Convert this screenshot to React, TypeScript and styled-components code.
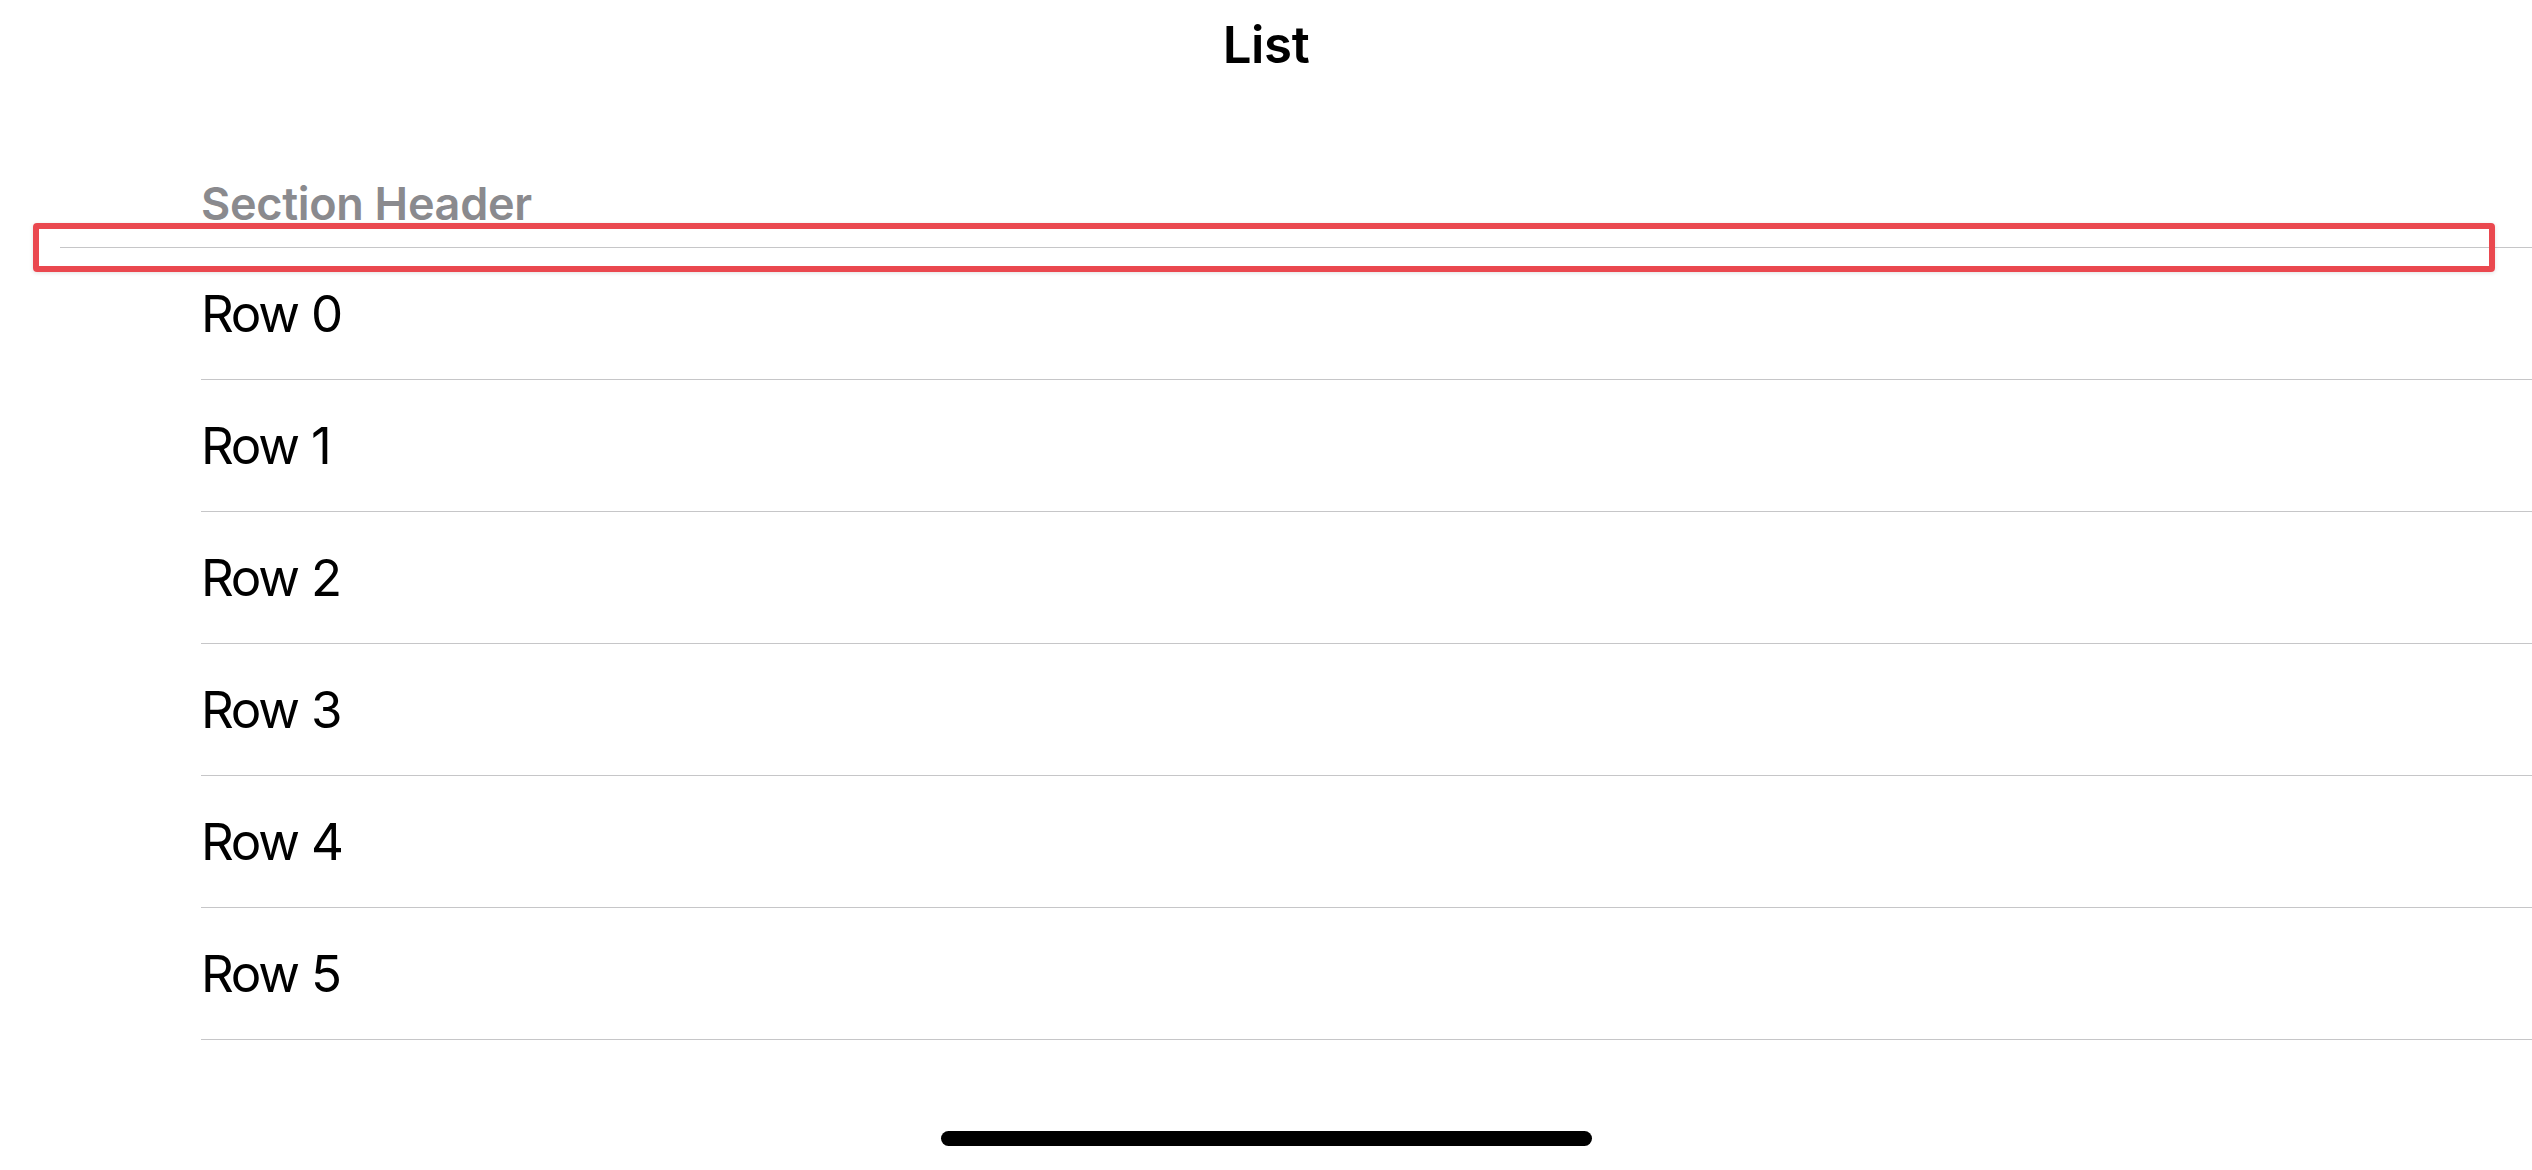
import React from "react";
import styled, { createGlobalStyle } from "styled-components";

const GlobalStyle = createGlobalStyle`
  html, body {
    margin: 0;
    padding: 0;
    background: #ffffff;
  }
  body {
    font-family: Inter, "Noto Sans", "Liberation Sans", sans-serif;
    -webkit-font-smoothing: antialiased;
  }
`;

const Screen = styled.div`
  position: relative;
  width: 2532px;
  height: 1170px;
  overflow: hidden;
  background: #ffffff;
  display: flex;
  flex-direction: column;
`;

const NavBar = styled.header`
  height: 89px;
  display: flex;
  justify-content: center;
  align-items: center;
`;

const NavTitle = styled.h1`
  margin: 0;
  font-size: 51px;
  line-height: 89px;
  font-weight: 600;
  color: #000000;
  letter-spacing: -0.4px;
`;

const SectionHeader = styled.div`
  height: 158px;
  box-sizing: border-box;
  display: flex;
  align-items: flex-end;
  padding: 0 0 16px 201px;
`;

const SectionTitle = styled.span`
  font-size: 45px;
  line-height: 55px;
  font-weight: 600;
  color: #8a8a8e;
  letter-spacing: -0.3px;
`;

const HeaderSeparator = styled.div`
  height: 1px;
  margin-left: 60px;
  background: #c6c6c8;
`;

const RowList = styled.ul`
  list-style: none;
  margin: 0;
  padding: 0 0 0 201px;
`;

const Row = styled.li`
  height: 132px;
  box-sizing: border-box;
  border-bottom: 1px solid #c6c6c8;
  display: flex;
  align-items: center;
`;

const RowLabel = styled.span`
  font-size: 51px;
  line-height: 131px;
  font-weight: 400;
  color: #000000;
  letter-spacing: -2.2px;
  word-spacing: 1px;
`;

const Highlight = styled.div`
  position: absolute;
  left: 33px;
  top: 223px;
  width: 2462px;
  height: 49px;
  box-sizing: border-box;
  border: 6.5px solid #ea484f;
  border-radius: 4px;
  box-shadow: 0 1px 4px rgba(0, 0, 0, 0.12);
  pointer-events: none;
`;

const HomeIndicator = styled.div`
  position: absolute;
  left: 941px;
  top: 1131px;
  width: 651px;
  height: 15px;
  border-radius: 7.5px;
  background: #000000;
`;

const rows = [0, 1, 2, 3, 4, 5];

export default function App() {
  return (
    <>
      <GlobalStyle />
      <Screen>
        <NavBar>
          <NavTitle>List</NavTitle>
        </NavBar>
        <SectionHeader>
          <SectionTitle>Section Header</SectionTitle>
        </SectionHeader>
        <HeaderSeparator />
        <RowList>
          {rows.map((i) => (
            <Row key={i}>
              <RowLabel>Row {i}</RowLabel>
            </Row>
          ))}
        </RowList>
        <Highlight />
        <HomeIndicator />
      </Screen>
    </>
  );
}
